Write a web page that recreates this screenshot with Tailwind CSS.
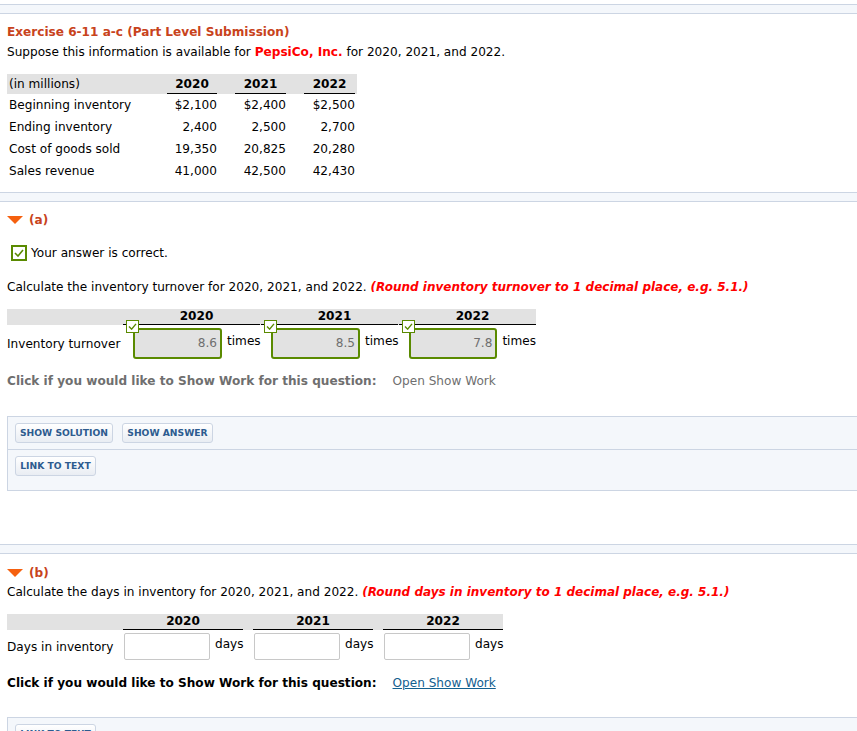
<!doctype html>
<html>
<head>
  <meta charset="UTF-8">
  <meta name="viewport" content="width=device-width, initial-scale=1.0">
  <script src="https://cdn.jsdelivr.net/npm/@tailwindcss/browser@4"></script>
</head>
<body class="bg-white text-black text-[12.1px] leading-[18px] font-['DejaVu_Sans',sans-serif] h-[731px] overflow-hidden">
  <div class="mt-[4px] h-[10px] bg-[#f4f7fb] border-y border-[#ccd5e3]"></div>

  <div class="px-[7px] pt-[9px] h-[178px]">
    <h1 class="font-bold text-[#c8431c]">Exercise 6-11 a-c (Part Level Submission)</h1>
    <p class="mt-[2px]">Suppose this information is available for <b class="text-[#ff0000]">PepsiCo, Inc.</b> for 2020, 2021, and 2022.</p>
    <table class="mt-[13px] border-collapse table-fixed w-[350px]">
      <colgroup><col class="w-[160px]"><col class="w-[50px]"><col class="w-[69px]"><col class="w-[71px]"></colgroup>
      <tr class="bg-[#e2e2e2] h-[20px]">
        <td class="pl-[2px]">(in millions)</td>
        <td class="font-bold text-center"><div class="border-b border-black w-[50px] ml-auto leading-[17px] pt-[2px]">2020</div></td>
        <td class="font-bold text-center"><div class="border-b border-black w-[51px] ml-auto leading-[17px] pt-[2px]">2021</div></td>
        <td class="font-bold text-center pr-[2px]"><div class="border-b border-black w-[51px] ml-auto leading-[17px] pt-[2px]">2022</div></td>
      </tr>
      <tr class="h-[22px]"><td class="pl-[2px]">Beginning inventory</td><td class="text-right">$2,100</td><td class="text-right">$2,400</td><td class="text-right pr-[2px]">$2,500</td></tr>
      <tr class="h-[22px]"><td class="pl-[2px]">Ending inventory</td><td class="text-right">2,400</td><td class="text-right">2,500</td><td class="text-right pr-[2px]">2,700</td></tr>
      <tr class="h-[22px]"><td class="pl-[2px]">Cost of goods sold</td><td class="text-right">19,350</td><td class="text-right">20,825</td><td class="text-right pr-[2px]">20,280</td></tr>
      <tr class="h-[22px]"><td class="pl-[2px]">Sales revenue</td><td class="text-right">41,000</td><td class="text-right">42,500</td><td class="text-right pr-[2px]">42,430</td></tr>
    </table>
  </div>

  <div class="h-[10px] bg-[#f4f7fb] border-y border-[#ccd5e3]"></div>

  <!-- part a -->
  <div class="h-[342px] relative">
    <div class="flex items-center gap-[6px] px-[7px] pt-[9px] font-bold text-[#c8431c]">
      <svg width="16" height="8" viewBox="0 0 16 8"><path d="M0 0H16L8 8Z" fill="#f5600f"/></svg>
      <span>(a)</span>
    </div>
    <div class="flex items-center gap-[4px] pl-[11px] mt-[15px]">
      <span class="w-[16px] h-[16px] border-[2px] border-[#5a8a00] flex items-center justify-center">
        <svg width="10" height="8" viewBox="0 0 10 8"><path d="M1 4L4 7L9 1" fill="none" stroke="#5a8a00" stroke-width="1.6"/></svg>
      </span>
      <span>Your answer is correct.</span>
    </div>
    <p class="px-[7px] mt-[16px] whitespace-nowrap">Calculate the inventory turnover for 2020, 2021, and 2022. <b class="italic text-[#ff0000] text-[12px]">(Round inventory turnover to 1 decimal place, e.g. 5.1.)</b></p>

    <div class="mx-[7px] mt-[13px] w-[529px]">
      <div class="bg-[#e2e2e2] h-[16px] grid grid-cols-[116px_138px_138px_137px] font-bold leading-[15px]">
        <div></div>
        <div class="border-b border-black text-center pl-[10px] mr-[1px]">2020</div>
        <div class="border-b border-black text-center pl-[10px] mr-[1px]">2021</div>
        <div class="border-b border-black text-center pl-[10px]">2022</div>
      </div>
      <div class="grid grid-cols-[116px_138px_138px_137px] items-start">
        <div class="pt-[10px] whitespace-nowrap">Inventory turnover</div>
        <div class="flex gap-[5px] pl-[10px]">
          <div class="relative mt-[3px] w-[89px] h-[31px] bg-[#e2e2e2] border-[2px] border-[#5a8a00] rounded-[3px] text-right text-[#6f6f6f] pr-[3px] pt-[4px]">8.6
            <span class="absolute -left-[9px] -top-[10px] w-[13px] h-[13px] bg-white border border-[#5a8a00] flex items-center justify-center"><svg width="9" height="7" viewBox="0 0 10 8"><path d="M1 4L4 7L9 1" fill="none" stroke="#5a8a00" stroke-width="1.6"/></svg></span>
          </div>
          <span class="pt-[7px]">times</span>
        </div>
        <div class="flex gap-[5px] pl-[10px]">
          <div class="relative mt-[3px] w-[89px] h-[31px] bg-[#e2e2e2] border-[2px] border-[#5a8a00] rounded-[3px] text-right text-[#6f6f6f] pr-[3px] pt-[4px]">8.5
            <span class="absolute -left-[9px] -top-[10px] w-[13px] h-[13px] bg-white border border-[#5a8a00] flex items-center justify-center"><svg width="9" height="7" viewBox="0 0 10 8"><path d="M1 4L4 7L9 1" fill="none" stroke="#5a8a00" stroke-width="1.6"/></svg></span>
          </div>
          <span class="pt-[7px]">times</span>
        </div>
        <div class="flex gap-[5px] pl-[10px]">
          <div class="relative mt-[3px] w-[89px] h-[31px] bg-[#e2e2e2] border-[2px] border-[#5a8a00] rounded-[3px] text-right text-[#6f6f6f] pr-[3px] pt-[4px]">7.8
            <span class="absolute -left-[9px] -top-[10px] w-[13px] h-[13px] bg-white border border-[#5a8a00] flex items-center justify-center"><svg width="9" height="7" viewBox="0 0 10 8"><path d="M1 4L4 7L9 1" fill="none" stroke="#5a8a00" stroke-width="1.6"/></svg></span>
          </div>
          <span class="pt-[7px]">times</span>
        </div>
      </div>
    </div>

    <div class="px-[7px] mt-[13px] text-[#6f6f6f] flex gap-[16px]">
      <b>Click if you would like to Show Work for this question:</b>
      <span>Open Show Work</span>
    </div>

    <div class="ml-[7px] mt-[26px] h-[75px] bg-[#f4f7fb] border border-r-0 border-[#ccd5e3]">
      <div class="h-[33px] border-b border-[#ccd5e3] flex items-center gap-[9px] pl-[7px]">
        <button class="h-[20px] w-[98px] rounded-[3px] border border-[#ccd5e3] bg-linear-to-b from-white to-[#e9edf3] text-[9.2px] font-bold text-[#2d5b8f]">SHOW SOLUTION</button>
        <button class="h-[20px] w-[91px] rounded-[3px] border border-[#ccd5e3] bg-linear-to-b from-white to-[#e9edf3] text-[9.2px] font-bold text-[#2d5b8f]">SHOW ANSWER</button>
      </div>
      <div class="flex pl-[7px] pt-[6px]">
        <button class="h-[20px] w-[81px] rounded-[3px] border border-[#ccd5e3] bg-linear-to-b from-white to-[#e9edf3] text-[9.2px] font-bold text-[#2d5b8f]">LINK TO TEXT</button>
      </div>
    </div>
  </div>

  <div class="h-[10px] bg-[#f4f7fb] border-y border-[#ccd5e3]"></div>

  <!-- part b -->
  <div>
    <div class="flex items-center gap-[6px] px-[7px] pt-[10px] font-bold text-[#c8431c]">
      <svg width="16" height="8" viewBox="0 0 16 8"><path d="M0 0H16L8 8Z" fill="#f5600f"/></svg>
      <span>(b)</span>
    </div>
    <p class="px-[7px] mt-[1px] whitespace-nowrap">Calculate the days in inventory for 2020, 2021, and 2022. <b class="italic text-[#ff0000] text-[12px]">(Round days in inventory to 1 decimal place, e.g. 5.1.)</b></p>

    <div class="mx-[7px] mt-[13px] w-[496px]">
      <div class="bg-[#e2e2e2] h-[16px] grid grid-cols-[106px_120px_120px_120px] gap-x-[10px] font-bold leading-[15px]">
        <div></div>
        <div class="border-b border-black text-center">2020</div>
        <div class="border-b border-black text-center">2021</div>
        <div class="border-b border-black text-center">2022</div>
      </div>
      <div class="grid grid-cols-[106px_120px_120px_120px] gap-x-[10px] items-start">
        <div class="pt-[8px] whitespace-nowrap">Days in inventory</div>
        <div class="flex gap-[5px] pl-[1px]"><input class="mt-[3px] w-[86px] h-[27px] bg-white border border-[#c8c8c8] rounded-[2px]"><span class="pt-[5px]">days</span></div>
        <div class="flex gap-[5px] pl-[1px]"><input class="mt-[3px] w-[86px] h-[27px] bg-white border border-[#c8c8c8] rounded-[2px]"><span class="pt-[5px]">days</span></div>
        <div class="flex gap-[5px] pl-[1px]"><input class="mt-[3px] w-[86px] h-[27px] bg-white border border-[#c8c8c8] rounded-[2px]"><span class="pt-[5px]">days</span></div>
      </div>
    </div>

    <div class="px-[7px] mt-[14px] flex gap-[16px]">
      <b>Click if you would like to Show Work for this question:</b>
      <a href="#" class="underline text-[#13608f]">Open Show Work</a>
    </div>

    <div class="ml-[7px] mt-[25px] h-[75px] bg-[#f4f7fb] border border-r-0 border-[#ccd5e3] pl-[7px] pt-[6px]">
      <button class="h-[20px] w-[81px] rounded-[3px] border border-[#ccd5e3] bg-linear-to-b from-white to-[#e9edf3] text-[9.2px] font-bold text-[#2d5b8f]">LINK TO TEXT</button>
    </div>
  </div>
</body>
</html>
